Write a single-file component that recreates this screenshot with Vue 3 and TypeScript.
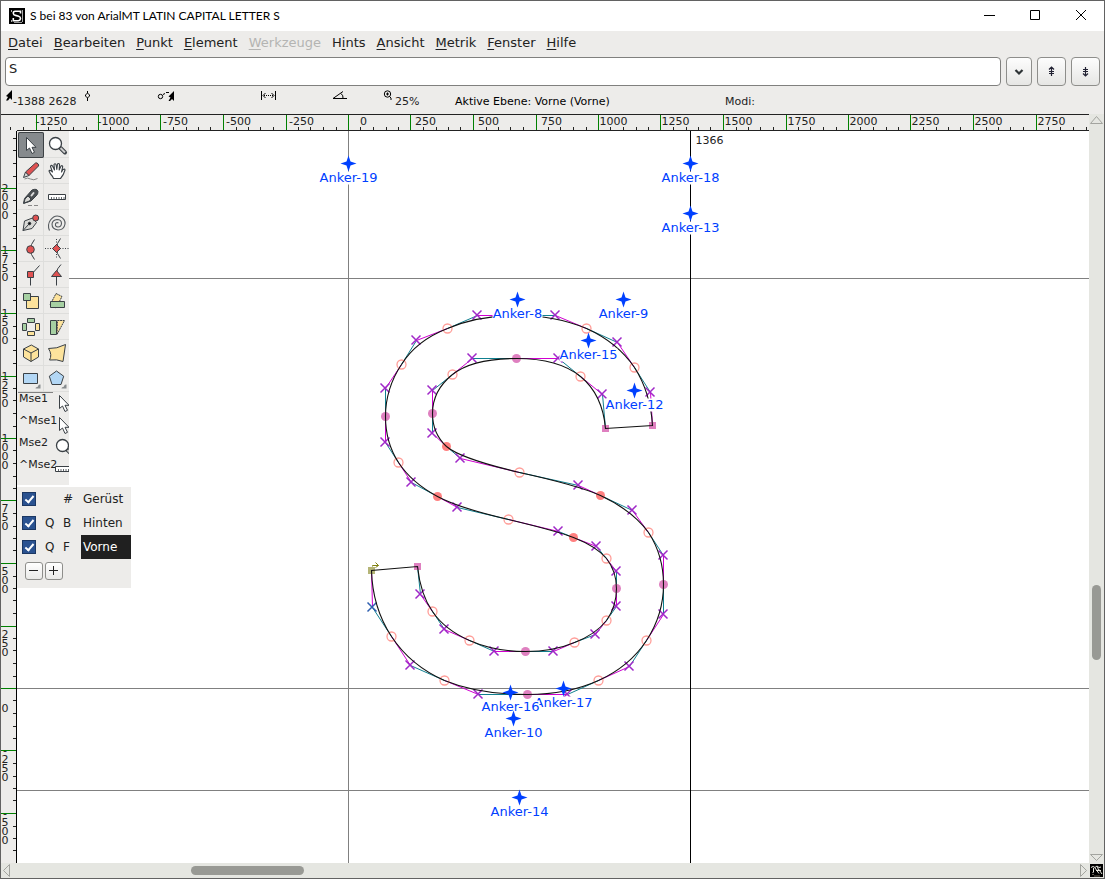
<script setup lang="ts">
import { computed, onBeforeUnmount, onMounted, ref } from 'vue'

type Pt = [number, number]
interface Node { x: number; y: number; kind: 'first' | 'corner' | 'extremum' | 'curve' | 'implied' | 'control' }

const menus = [
  ['D', 'atei'], ['B', 'earbeiten'], ['P', 'unkt'], ['E', 'lement'], ['W', 'erkzeuge'],
  ['H', 'ints', 'i'], ['A', 'nsicht'], ['M', 'etrik'], ['F', 'enster'], ['H', 'ilfe'],
]

const glyphText = ref('S')
const layers = ref([
  { on: true, q: '', tag: '#', name: 'Gerüst' },
  { on: true, q: 'Q', tag: 'B', name: 'Hinten' },
  { on: true, q: 'Q', tag: 'F', name: 'Vorne' },
])
const activeLayer = ref(2)
const activeTool = ref('pointer')

const tools = [
  'pointer', 'magnify', 'freehand', 'hand', 'knife', 'measure', 'pen', 'spiro', 'curve', 'hvcurve',
  'corner', 'tangent', 'scale', 'rotate', 'flip', 'skew', 'rotate3d', 'perspective', 'rectangle', 'polygon',
]
const mouse = [
  { label: 'Mse1', icon: 'pointer' }, { label: '^Mse1', icon: 'pointer' },
  { label: 'Mse2', icon: 'magnify' }, { label: '^Mse2', icon: 'measure' },
]

const viewWidth = ref(window.innerWidth)
const viewHeight = ref(window.innerHeight)
const measure = () => {
  viewWidth.value = window.innerWidth
  viewHeight.value = window.innerHeight
}
onMounted(() => window.addEventListener('resize', measure))
onBeforeUnmount(() => window.removeEventListener('resize', measure))

const originX = 348
const originY = 688
const step = 12.5

// Ticks that fall between two pixels go to the even one.
const snap = (v: number) => (v % 1 === 0.5 && Math.floor(v) % 2 === 0 ? Math.floor(v) : Math.round(v))
const range = (from: number, to: number) => Array.from({ length: Math.max(0, to - from + 1) }, (_, i) => from + i)

const hTicks = computed(() =>
  range(-27, Math.floor((viewWidth.value - 18 - originX) / step)).map((k) => ({
    x: snap(originX + k * step), major: k % 5 === 0, value: k * 50,
  })))

const stackStart: Record<number, number> = { 1: 20, 3: 8, 4: 0, 5: 0 }
const vTicks = computed(() =>
  range(-Math.floor((viewHeight.value - 18 - originY) / step), 44).map((k) => {
    const chars = String(k * 50).split('')
    return { y: snap(originY - k * step), major: k % 5 === 0, chars, start: stackStart[chars.length] ?? 0 }
  }))

const nodes: Node[] = ([
  [371, 570, 'first'], [372, 607, 'control'], [391, 636, 'implied'], [410, 665, 'control'], [444, 680, 'implied'],
  [478, 694, 'control'], [527, 694, 'extremum'], [567, 694, 'control'], [598, 680, 'implied'], [629, 666, 'control'],
  [646, 640, 'implied'], [663, 614, 'control'], [663, 584, 'extremum'], [663, 555, 'control'], [648, 532, 'implied'],
  [632, 510, 'control'], [600, 495, 'curve'], [578, 485, 'control'], [519, 472, 'implied'], [460, 458, 'control'],
  [446, 446, 'curve'], [432, 433, 'control'], [432, 413, 'extremum'], [432, 390, 'control'], [452, 374, 'implied'],
  [472, 358, 'control'], [516, 358, 'extremum'], [558, 358, 'control'], [580, 376, 'implied'], [602, 394, 'control'],
  [605, 428, 'corner'], [652, 425, 'corner'], [650, 392, 'control'], [634, 367, 'implied'], [617, 342, 'control'],
  [586, 328, 'implied'], [555, 315, 'control'], [516, 315, 'extremum'], [477, 315, 'control'], [447, 328, 'implied'],
  [416, 340, 'control'], [401, 364, 'implied'], [385, 388, 'control'], [385, 416, 'extremum'], [385, 442, 'control'],
  [398, 462, 'implied'], [411, 482, 'control'], [437, 496, 'curve'], [457, 507, 'control'], [508, 519, 'implied'],
  [558, 531, 'control'], [573, 537, 'curve'], [596, 546, 'control'], [606, 558, 'implied'], [616, 571, 'control'],
  [616, 588, 'extremum'], [616, 606, 'control'], [606, 620, 'implied'], [595, 634, 'control'], [574, 642, 'implied'],
  [553, 651, 'control'], [525, 651, 'extremum'], [494, 651, 'control'], [469, 640, 'implied'], [444, 629, 'control'],
  [432, 611, 'implied'], [420, 594, 'control'], [417, 566, 'corner'],
] as [number, number, Node['kind']][]).map(([x, y, kind]) => ({ x, y, kind }))

const outline = nodes.reduce((d, n, i) => {
  if (i === 0) return `M${n.x} ${n.y}`
  if (n.kind === 'control') return `${d}Q${n.x} ${n.y} `
  return nodes[i - 1].kind === 'control' ? `${d}${n.x} ${n.y}` : `${d}L${n.x} ${n.y}`
}, '') + 'Z'

const handles = nodes.flatMap((n, i) => {
  if (n.kind !== 'control') return []
  const a = nodes[i - 1]
  const b = nodes[i + 1]
  return [{ a: [a.x, a.y] as Pt, b: [n.x, n.y] as Pt, cls: 'next' }, { a: [n.x, n.y] as Pt, b: [b.x, b.y] as Pt, cls: 'prev' }]
})

const anchors = [
  { n: 19, x: 348, y: 163 }, { n: 18, x: 690, y: 163 }, { n: 13, x: 690, y: 213 }, { n: 8, x: 517, y: 299 },
  { n: 9, x: 623, y: 299 }, { n: 15, x: 588, y: 340 }, { n: 12, x: 634, y: 390 }, { n: 17, x: 563, y: 688 },
  { n: 16, x: 510, y: 692 }, { n: 10, x: 513, y: 718 }, { n: 14, x: 519, y: 797 },
]
</script>

<template>
  <div class="window">
    <header class="titlebar">
      <svg class="logo" width="16" height="16" viewBox="0 0 16 16">
        <rect width="16" height="16" fill="#000" />
        <path d="M11.5 5.5V3.2H6.2Q4.2 3.4 4.3 5.2 4.4 7 6.5 7.4L9.6 8.2Q11.6 8.8 11.5 10.6 11.3 12.5 9.2 12.7H4.3V10" fill="none" stroke="#fff" stroke-width="1.6" />
        <path d="M13.5 2v12M2.5 2v2M2.5 12v2M5 14.4h8" stroke="#aaa" fill="none" />
      </svg>
      <h1>S bei 83 von ArialMT LATIN CAPITAL LETTER S</h1>
      <div class="wbtns">
        <button aria-label="Minimieren"><svg width="12" height="12"><path d="M1 5.5h11" /></svg></button>
        <button aria-label="Maximieren"><svg width="12" height="12"><path d="M1.500 .5h9v9h-9z" /></svg></button>
        <button aria-label="Schließen"><svg width="12" height="12"><path d="M1 0l10 10M11 0L1 10" /></svg></button>
      </div>
    </header>

    <nav class="menubar">
      <button v-for="m in menus" :key="m[0] + m[1]" :disabled="m[0] === 'W'">
        <template v-if="m[2]">H<u>i</u>nts</template>
        <template v-else><u>{{ m[0] }}</u>{{ m[1] }}</template>
      </button>
    </nav>

    <div class="entry">
      <input v-model="glyphText" aria-label="Glyphen" />
      <button class="drop" aria-label="Liste"><svg width="10" height="8"><path d="M1.5 2l3.5 3.5L8.5 2" fill="none" stroke="#2e3436" stroke-width="2.2" /></svg></button>
      <button aria-label="Vorherige"><svg width="9" height="11"><path d="M4.5 1v9M2 3.500L4.500 1 7 3.500M2 5.500h5M2 7.500h5" fill="none" stroke="#222233" stroke-width="1.2" /></svg></button>
      <button aria-label="Nächste"><svg width="9" height="11"><path d="M4.5 1v9M2 7.500l2.500 2.500L7 7.500M2 3.500h5M2 5.500h5" fill="none" stroke="#222233" stroke-width="1.2" /></svg></button>
    </div>

    <div class="info">
      <div>
        <svg width="9" height="12"><path d="M7 0v10L5 8 3 10.500 1 10.500 3 7 1 6z" fill="#000" /></svg>
        <span class="pos">-1388 2628</span>
      </div>
      <div><svg width="8" height="12"><path d="M3.500 1v2M3.500 8v3M3.500 3l2 2v1l-2 2-2-2V5z" fill="none" stroke="#000" /></svg></div>
      <div><svg width="18" height="12"><circle cx="3.500" cy="6.500" r="2.200" fill="none" stroke="#000" /><path d="M6 4.500l2-1M9 2.500h3" stroke="#000" /><path d="M17 1v10l-2-2-2 2h-1.500l2-3.500-2-1z" fill="#000" /></svg></div>
      <div><svg width="18" height="12"><path d="M2.500 1v9M16.500 1v9M6.500 3L4 5.500 6.500 8M12.500 3L15 5.500 12.500 8" fill="none" stroke="#000" /><path d="M5 5.500h10" stroke="#000" stroke-dasharray="1 1" /></svg></div>
      <div><svg width="18" height="12"><path d="M12 1.500L2 8.500h14M10 3.500q2.500 2 2 5" fill="none" stroke="#000" /></svg></div>
      <div>
        <svg width="10" height="12"><circle cx="4.500" cy="4" r="3.200" fill="none" stroke="#000" /><path d="M3 4h3M4.500 2.500v3M6.500 6.500L8 8v2" fill="none" stroke="#000" /></svg>
        <span class="pct">25%</span>
      </div>
      <div><span class="strong">Aktive Ebene: Vorne (Vorne)</span></div>
      <div><span>Modi:</span></div>
    </div>

    <main class="work">
      <svg class="ruler-h">
        <g transform="translate(-.5 0)">
          <g v-for="t in hTicks" :key="t.x">
            <text v-if="t.major" :x="t.x + 15" y="10" text-anchor="middle">{{ t.value }}</text>
            <line :class="t.major ? 'major' : 'minor'" :x1="t.x" :x2="t.x" :y1="t.major ? 0 : 12" y2="15" />
          </g>
        </g>
        <line class="base" x1="16" x2="100%" y1="15.500" y2="15.500" />
      </svg>

      <svg class="ruler-v">
        <g transform="translate(0 -130.5)">
          <g v-for="t in vTicks" :key="t.y">
            <template v-if="t.major">
              <text v-for="(c, i) in t.chars" :key="i" x="4" text-anchor="middle" :y="t.y + t.start + 3 + i * 9">{{ c }}</text>
            </template>
            <line :class="t.major ? 'major' : 'minor'" :x1="t.major ? 0 : 12" x2="15" :y1="t.y" :y2="t.y" />
          </g>
        </g>
      </svg>

      <div class="canvas">
        <svg class="drawing">
          <g transform="translate(-16.5 -130.5)">
            <g class="guides">
              <path d="M0 278H4000M0 688H4000M0 790H4000M348 0V3000" />
              <path class="advance" d="M690 0V3000" />
            </g>
            <text class="width" x="695" y="143">1366</text>
            <line v-for="(h, i) in handles" :key="'h' + i" :class="h.cls" :x1="h.a[0]" :y1="h.a[1]" :x2="h.b[0]" :y2="h.b[1]" />
            <template v-for="(n, i) in nodes" :key="'n' + i">
              <circle v-if="n.kind === 'implied'" class="implied" :cx="n.x" :cy="n.y" r="4.500" />
              <circle v-else-if="n.kind === 'extremum'" class="extremum" :cx="n.x" :cy="n.y" r="4.500" />
              <circle v-else-if="n.kind === 'curve'" class="curvept" :cx="n.x" :cy="n.y" r="4.500" />
              <rect v-else-if="n.kind === 'corner'" class="extremum" :x="n.x - 3.500" :y="n.y - 3.500" width="7" height="7" />
              <rect v-else-if="n.kind === 'first'" class="first" :x="n.x - 3.500" :y="n.y - 3.500" width="7" height="7" />
              <path v-else :class="['cross', { start: i === 1 }]" :d="`M${n.x - 5} ${n.y - 5}l9 9m0 -9l-9 9`" />
            </template>
            <path class="dir" d="M372 566v-1h6M375 562l3 3-3 2" />
            <path class="outline" :d="outline" />
            <g v-for="a in anchors" :key="a.n" class="anchor">
              <rect :x="a.x - (a.n < 10 ? 25 : 29)" :y="a.y + 8" :width="a.n < 10 ? 50 : 58" height="13" />
              <path :d="`M${a.x} ${a.y - 8}l2 6 6 2 -6 2 -2 6 -2 -6 -6 -2 6 -2z`" />
              <text :x="a.x" :y="a.y + 18" text-anchor="middle">Anker-{{ a.n }}</text>
            </g>
          </g>
        </svg>

        <aside class="toolbox">
          <div class="tools">
            <button v-for="t in tools" :key="t" :aria-label="t" :class="{ active: t === activeTool }" @click="activeTool = t">
              <svg width="26" height="26" viewBox="0 0 26 26"><use :href="'#i-' + t" /></svg>
            </button>
          </div>
          <div class="rule"></div>
          <div v-for="m in mouse" :key="m.label" class="mouse">
            <span>{{ m.label }}</span>
            <svg width="26" height="26" viewBox="0 0 26 26"><use :href="'#i-' + m.icon" /></svg>
          </div>
        </aside>

        <aside class="layers">
          <div v-for="(l, i) in layers" :key="l.name" class="layer">
            <input v-model="l.on" type="checkbox" :aria-label="l.name" />
            <span>{{ l.q }}</span><span>{{ l.tag }}</span>
            <button :class="{ current: i === activeLayer }" @click="activeLayer = i">{{ l.name }}</button>
          </div>
          <div class="pm">
            <button aria-label="Ebene entfernen"><svg width="12" height="12"><path d="M1 5.500h9" /></svg></button>
            <button aria-label="Ebene hinzufügen"><svg width="12" height="12"><path d="M1 5.500h9M5.500 1v9" /></svg></button>
          </div>
        </aside>
      </div>

      <div class="scroll vertical">
        <button aria-label="Nach oben"><svg width="15" height="15"><path d="M1.500 9.500h12L7.500 2.500z" /></svg></button>
        <div class="track"><div class="thumb"></div></div>
        <button aria-label="Nach unten"><svg width="15" height="15"><path d="M1.500 6.500h12L7.500 12.500z" /></svg></button>
      </div>
      <div class="scroll horizontal">
        <button aria-label="Nach links"><svg width="15" height="15"><path d="M8.500 1.500v12L2.500 7.500z" /></svg></button>
        <div class="track"><div class="thumb"></div></div>
        <button aria-label="Nach rechts"><svg width="15" height="15"><path d="M6.500 1.500v12L12.500 7.500z" /></svg></button>
      </div>
      <div class="grip">
        <svg width="14" height="14" viewBox="0 0 14 14"><rect width="13" height="13" fill="#000" /><path d="M1 3.500l2-1 2 1 2-1.500 2 1.500 2-.5M3.500 4v4l-1 1M5 4l4 5.500M7.500 3l1 3M8.500 5l3.500 5M6 6.500h5" stroke="#e8e8e0" fill="none" /><path d="M2 10.500h2M4 12h6" stroke="#6a6355" /></svg>
      </div>
    </main>

    <svg class="defs" width="0" height="0">
      <defs>
        <g id="i-pointer" fill="#fff" stroke="#3a4045" stroke-linejoin="round"><path d="M8.500 5.500v13l3-2.500 2.500 5.500 2.500-1.200-2.500-5h4z" /></g>
        <g id="i-magnify" stroke="#3a4045"><path d="M16.500 16l4.500 4.500" stroke-width="4" stroke-linecap="round" /><path d="M16.500 16l4.500 4.500" stroke="#ccc" stroke-width="2" /><circle cx="11.500" cy="11.500" r="6" fill="#fff" stroke-width="1.300" /></g>
        <g id="i-freehand" stroke="#3a4045" stroke-linejoin="round"><path d="M5.500 19.500l2-5.500 3.500 3.500z" fill="#d8d8d5" /><path d="M7.500 14L17.500 5q1.500-.5 2.500.8t.5 2.200L11 17.500z" fill="#e05252" /><path d="M6.500 21q3-1.800 6 0t7-.5" fill="none" stroke="#888" /></g>
        <g id="i-hand" fill="#fff" stroke="#3a4045" stroke-width="1.100" stroke-linejoin="round"><path d="M9.500 20.500q-1-2.500-3-4.500l-1.500-3q.5-1.500 3 .5L8.500 14 6.500 8.500q.5-2 2-.5l2 4-.5-5.500q1-1.500 2 0l.8 5 .7-5.500q1.200-1.200 2 .3l-.3 5.700 1.800-4q1.500-1 1.700.6L17.500 14l1.500-2.500q2-1 2 .5-1.500 5.500-4.500 8.500z" /></g>
        <g id="i-knife" stroke="#3a4045" stroke-linejoin="round"><path d="M5.500 19.500l1-5 7.500-8.500q5-2 6 1.500.2 2.500-2 4.500L13 17z" fill="#4b5053" /><path d="M6 19l1-4 3-3 3 3-1.500 2z" fill="#d8d8d5" /><path d="M13.500 11.500l2-2.500" stroke="#ddd" stroke-width="2" stroke-linecap="round" /><path d="M10 21.500h4M16 21.500h4" stroke="#888" /></g>
        <g id="i-measure" stroke="#3a4045"><path d="M4.500 10.500h17v5h-17z" fill="#fff" /><path d="M7.500 15v-2M10 15v-2M12.500 15v-2M15 15v-2M17.500 15v-2M20 15v-2" stroke-width=".8" /></g>
        <g id="i-pen" stroke="#3a4045" stroke-linejoin="round"><path d="M5 20.500l1.500-9.500L14.500 8l4 4.500-4.500 6z" fill="#d8d8d5" /><path d="M5 20.500L11 14" /><circle cx="11.500" cy="13.500" r="1.300" /><circle cx="17.700" cy="8" r="3" fill="#e05252" /></g>
        <g id="i-spiro" fill="none" stroke="#555a5e" stroke-width="1.100"><path d="M5.500 20.500Q3 15 6.500 10q4-5.500 9.500-3.500 5.500 2.500 5 7.500-1 6-7 6-6-.7-6-6 .5-4 5-4.500 4.500 0 4.500 4-.3 3.500-3.500 3.500-3-.3-2.500-3 .7-2 3-1" /></g>
        <g id="i-curve" fill="none" stroke="#3a4045"><path d="M16.500 3.500q-8 10 0 20" /><circle cx="12.500" cy="13.500" r="3.800" fill="#e05252" /></g>
        <g id="i-hvcurve" fill="none" stroke="#3a4045"><path d="M12.500 3v20M1 12.500h24" stroke-dasharray="1 1.500" /><path d="M16.500 2.500q-8 10 0 20" /><path d="M12.500 8.500l4 4-4 4-4-4z" fill="#e05252" /></g>
        <g id="i-corner" fill="#e05252" stroke="#3a4045"><path d="M12.500 23.500v-10L21.500 3.500" fill="none" /><path d="M9.500 9.500h6v6h-6z" /></g>
        <g id="i-tangent" fill="#e05252" stroke="#3a4045"><path d="M12.500 23.500V11q0-4 4.500-8.500" fill="none" /><path d="M7.500 14.500l5-6 5 6z" /></g>
        <g id="i-scale" stroke="#3a4045"><path d="M8.500 8.500h12v12h-12z" fill="#fde39c" /><path d="M5.500 5.500h7v7h-7z" fill="#a6d0a2" /></g>
        <g id="i-rotate" stroke="#3a4045"><path d="M12 5.500l6 3-6 11.500-6-3z" fill="#fde39c" stroke-dasharray="2 .6" /><path d="M6.500 13.500h14v6h-14z" fill="#a6d0a2" /></g>
        <g id="i-flip" stroke="#3a4045"><path d="M9.500 4.500h7v4h-7zM4.500 9.500h4v7h-4z" fill="#a6d0a2" /><path d="M17.500 9.500h4v7h-4zM9.500 17.500h7v4h-7z" fill="#fde39c" /></g>
        <g id="i-skew" stroke="#3a4045"><path d="M13.500 6.500h7l-7.500 14z" fill="#fde39c" stroke-dasharray="2 .6" /><path d="M6.500 6.500h6v14h-6z" fill="#a6d0a2" /></g>
        <g id="i-rotate3d" stroke="#3a4045" fill="#fde39c" stroke-linejoin="round"><path d="M13.300 5l7.200 4v8l-7.500 4.500L5.500 17V9z" /><path d="M5.500 9l7.500 4 7.500-4M13 13v8.500" fill="none" /></g>
        <g id="i-perspective" stroke="#3a4045" fill="#fde39c"><path d="M4.500 8.500q8 .5 17-4l-2.500 17q-6-2.500-13.500-1.500 3-5-1-11.500z" /></g>
        <g id="i-rectangle" stroke="#3a4045"><path d="M5.500 7.500h14v10h-14z" fill="#b3d7f5" /><path d="M22.500 18.500v4h-5q0-1.500 1.500-1.500 1 0 1.200-1.200t2.300-1.300z" fill="#888c8e" stroke="none" /></g>
        <g id="i-polygon" stroke="#3a4045"><path d="M12.500 5l7.200 5.200-2.700 8.300H8L5.300 10.200z" fill="#b3d7f5" /><path d="M22.500 18.500v4h-5q0-1.500 1.500-1.500 1 0 1.200-1.200t2.300-1.300z" fill="#888c8e" stroke="none" /></g>
      </defs>
    </svg>
  </div>
</template>

<style>
body { background: #edecea; }
</style>

<style scoped>
.window {
  box-sizing: border-box;
  height: 100vh;
  min-height: 640px;
  display: flex;
  flex-direction: column;
  border: 1px solid #626262;
  background: #edecea;
  color: #222;
  font: 13px "DejaVu Sans", sans-serif;
  overflow: hidden;
}
button { font: inherit; color: inherit; padding: 0; margin: 0; border: 0; background: none; }
svg { display: block; }
.defs { position: absolute; }

.titlebar { display: flex; align-items: center; height: 30px; flex: none; background: #fff; padding-left: 8px; gap: 5px; }
.titlebar h1 { flex: 1; margin: 0; font: 400 12px/16px Lato, sans-serif; color: #000; white-space: nowrap; }
.titlebar .logo { flex: none; }
.wbtns { display: flex; }
.wbtns button { width: 46px; height: 30px; display: grid; place-items: center; }
.wbtns path { fill: none; stroke: #000; }

.menubar { display: flex; align-items: center; gap: 11px; height: 26px; flex: none; padding: 0 7px; box-sizing: border-box; }
.menubar button { line-height: 20px; margin-bottom: 3px; }
.menubar button:disabled { color: #b4b4b2; }
.menubar u { text-decoration-thickness: 1px; text-underline-offset: 2px; }

.entry { display: flex; height: 29px; flex: none; padding: 0 4px; gap: 5px; }
.entry input {
  flex: 1; min-width: 0; box-sizing: border-box; border: 1px solid #80807e; border-radius: 4px; background: #fff;
  padding: 0 3px 6px; font: inherit; color: #222; outline: none;
}
.entry button {
  width: 29px; box-sizing: border-box; display: grid; place-items: center;
  border: 1px solid #8e8e8b; border-radius: 4px; background: linear-gradient(#fdfdfd, #e6e6e4);
}
.entry .drop { width: 26px; }

.info {
  display: grid; grid-template-columns: 79px 73px 102px 72px 52px 72px 270px 1fr;
  height: 28px; flex: none; padding: 4px 0 0 4px; box-sizing: border-box; font-size: 11px; line-height: 14px; white-space: nowrap;
}
.info div { display: flex; }
.info span { margin-top: 5px; }
.info .pct { margin-left: 2px; }
.info .pos { margin-left: -1px; }
.info .strong { color: #000; }

.work { flex: 1; min-height: 0; display: grid; grid-template: 17px 1fr 15px / 16px 1fr 15px; }
.ruler-h { grid-area: 1 / 1 / 2 / 3; width: 100%; height: 17px; box-sizing: border-box; border-top: 1px solid #222; overflow: hidden; }
.ruler-v { grid-area: 2 / 1; width: 16px; height: 100%; box-sizing: border-box; border-right: 1px solid #000; overflow: hidden; }
.ruler-h text, .ruler-v text, .width { font-size: 11px; fill: #222; }
.major { stroke: #008000; }
.minor, .base { stroke: #222; }

.canvas { grid-area: 2 / 2; position: relative; background: #fff; min-width: 0; overflow: hidden; }
.drawing { position: absolute; inset: 0; width: 100%; height: 100%; }
.guides path { fill: none; stroke: #808080; }
.guides .advance { stroke: #000; }
.next { stroke: #d000d0; }
.prev { stroke: #108090; }
.implied { fill: none; stroke: #ff9d98; stroke-width: 1.3; }
.extremum { fill: #df80c0; }
.curvept { fill: #ff8080; }
.first { fill: #b5b577; }
.cross { fill: none; stroke: #a028c8; stroke-width: 1.5; }
.cross.start { stroke: #3060b0; }
.dir { fill: none; stroke: #808010; }
.outline { fill: none; stroke: #111; stroke-width: 1.1; }
.anchor rect { fill: #fff; }
.anchor path, .anchor text { fill: #0040ff; }
.anchor text { font-size: 13px; }

.toolbox { position: absolute; left: 0; top: 0; width: 52px; height: 354px; overflow: hidden; background: #edecea; }
.tools { display: grid; grid-template-columns: 26px 26px; margin: 1px 0 0 1px; }
.tools button { width: 26px; height: 26px; box-shadow: inset -1px -1px #dededc; }
.tools .active { background: #868a8d; box-shadow: inset 0 0 0 1px #3c4144; border-radius: 2px; }
.rule { height: 1px; width: 35px; margin-left: 1px; background: #808080; }
.mouse { display: flex; align-items: flex-start; height: 22px; font-size: 11px; line-height: 12px; }
.mouse span { box-sizing: border-box; width: 34px; padding-left: 2px; flex: none; white-space: nowrap; }
.mouse svg { flex: none; margin-top: -3px; }

.layers { position: absolute; left: 0; top: 356px; width: 114px; height: 101px; background: #edecea; font-size: 12px; }
.layer { display: grid; grid-template-columns: 23px 18px 18px 50px; align-items: center; height: 24px; padding-left: 5px; }
.layer button { height: 24px; text-align: left; padding-left: 2px; }
.layer .current { background: #202020; color: #fff; }
.layer input { appearance: none; margin: 0; width: 14px; height: 14px; border: 1px solid #1b3763; background: #2a5290; position: relative; box-sizing: border-box; }
.layer input:checked::after { content: ""; position: absolute; left: 4px; top: 1px; width: 3px; height: 7px; border: solid #fff; border-width: 0 2px 2px 0; transform: rotate(40deg); }
.pm { display: flex; gap: 2px; padding: 3px 0 0 8px; }
.pm button { width: 18px; height: 18px; box-sizing: border-box; border: 1px solid #8e8e8b; border-radius: 3px; background: linear-gradient(#fff, #eaeae8); display: grid; place-items: center; }
.pm path { stroke: #222; }

.scroll { display: flex; background: #e5e6e1; }
.scroll path { fill: none; stroke: #a3a49f; }
.track { flex: 1; position: relative; }
.thumb { position: absolute; border-radius: 5px; background: #989994; }
.vertical { grid-area: 1 / 3 / 3 / 4; flex-direction: column; }
.vertical .thumb { left: 3px; width: 9px; top: 63.400%; height: 10.500%; }
.horizontal { grid-area: 3 / 1 / 4 / 3; }
.horizontal .thumb { top: 3px; height: 9px; left: 16.500%; width: 10.700%; }
.grip { grid-area: 3 / 3; background: #e5e6e1; padding: 1px; }
</style>
